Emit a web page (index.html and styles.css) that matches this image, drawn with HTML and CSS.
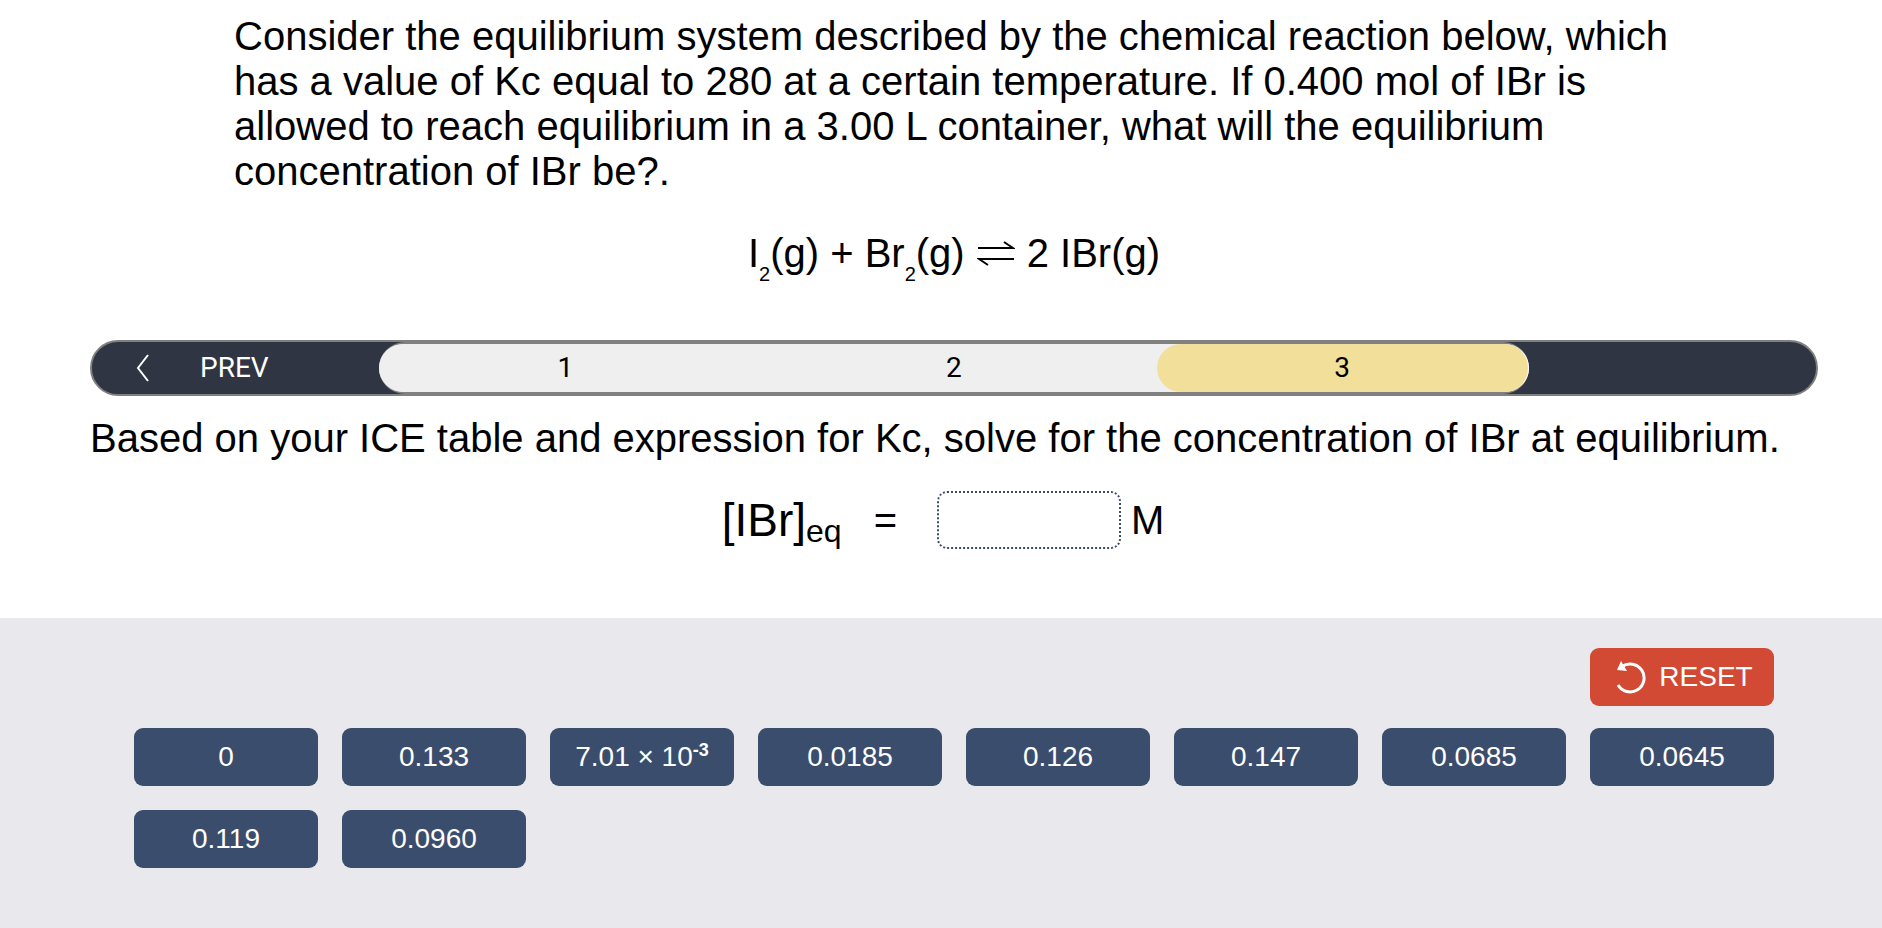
FILE: index.html
```
<!DOCTYPE html>
<html lang="en">

<head>
    <meta charset="UTF-8" />
    <meta name="viewport" content="width=device-width, initial-scale=1" />
    <title>Equilibrium Concentration</title>
    <link rel="stylesheet" href="styles.css">
</head>

<body>

    <main class="question">
        <p class="prompt">Consider the equilibrium system described by the chemical reaction below, which has a value of Kc equal to 280 at a certain temperature. If 0.400 mol of IBr is allowed to reach equilibrium in a 3.00 L container, what will the equilibrium concentration of IBr be?.</p>

        <p class="reaction">
            <span>I<sub>2</sub>(g) + Br<sub>2</sub>(g)</span>
            <svg class="arrows" viewBox="0 0 38 28" aria-label="is in equilibrium with">
                <path d="M1 8H36L27 2M37 19H2L11 25" />
            </svg>
            <span>2 IBr(g)</span>
        </p>

        <nav class="steps">
            <button type="button" class="prev">
                <svg class="chevron" viewBox="0 0 14 28" aria-hidden="true">
                    <path d="M12 1L2 14L12 27" />
                </svg>
                <span>PREV</span>
            </button>
            <div class="step-list">
                <button type="button" class="step">1</button>
                <button type="button" class="step">2</button>
                <button type="button" class="step active">3</button>
            </div>
        </nav>

        <p class="instruction">Based on your ICE table and expression for Kc, solve for the concentration of IBr at equilibrium.</p>

        <div class="answer">
            <label class="symbol" for="answerInput">[IBr]<sub>eq</sub></label>
            <span class="equals">=</span>
            <input type="text" id="answerInput" class="drop-box">
            <span class="unit">M</span>
        </div>
    </main>

    <section class="tray">
        <div class="tiles">
            <button type="button" class="tile reset">
                <svg class="reset-icon" viewBox="0 0 32 34" aria-hidden="true">
                    <path class="arc" d="M7 6.500A14 14 0 1 1 3 25" />
                    <path class="head" d="M6 1L12 11L2 10Z" />
                </svg>
                <span>RESET</span>
            </button>
        </div>
        <div class="tiles">
            <button type="button" class="tile">0</button>
            <button type="button" class="tile">0.133</button>
            <button type="button" class="tile">7.01 × 10<sup>-3</sup></button>
            <button type="button" class="tile">0.0185</button>
            <button type="button" class="tile">0.126</button>
            <button type="button" class="tile">0.147</button>
            <button type="button" class="tile">0.0685</button>
            <button type="button" class="tile">0.0645</button>
            <button type="button" class="tile">0.119</button>
            <button type="button" class="tile">0.0960</button>
        </div>
    </section>

</body>

</html>
```

FILE: styles.css
```
* {
    box-sizing: border-box;
}

body {
    margin: 0;
    min-height: 100vh;
    display: flex;
    flex-direction: column;
    background-color: #ffffff;
    color: #000000;
    font-family: "Liberation Sans", Arial, sans-serif;
    font-size: 40px;
    line-height: 45px;
}

button {
    border: none;
    margin: 0;
    font-family: inherit;
    font-size: 28px;
    line-height: 32px;
    cursor: pointer;
}

p {
    margin: 0;
}

.question {
    padding: 14px 64px 0 90px;
}

/* Question text and reaction */
.prompt {
    padding: 0 144px;
}

.reaction {
    display: flex;
    justify-content: center;
    align-items: center;
    gap: 12px;
    margin-top: 37px;
}

.reaction sub {
    font-size: 20px;
    line-height: 0;
    vertical-align: -14px;
}

.arrows {
    width: 38px;
    height: 28px;
    fill: none;
    stroke: #000000;
    stroke-width: 2;
}

/* Step bar */
.steps {
    display: grid;
    grid-template-columns: 1fr 4fr 1fr;
    height: 56px;
    margin-top: 64px;
    border: 2px solid #808080;
    border-radius: 28px;
    background-color: #2f3542;
}

.steps button {
    font-family: Roboto, sans-serif;
}

.prev {
    display: flex;
    align-items: center;
    gap: 50px;
    padding: 0 44px;
    background: none;
    color: #ffffff;
}

.chevron {
    width: 14px;
    height: 28px;
    fill: none;
    stroke: #ffffff;
    stroke-width: 2;
}

.step-list {
    display: flex;
    justify-content: space-between;
    border-top: 2px solid #808080;
    border-bottom: 2px solid #808080;
    border-radius: 28px;
    background-color: #efefef;
}

.step {
    width: 372px;
    border-radius: 24px;
    background-color: #efefef;
    color: #000000;
}

.step.active {
    border-right: 1px solid #ffffff;
    background-color: #f2df9a;
}

/* Answer row */
.instruction {
    margin-top: 20px;
}

.answer {
    display: flex;
    justify-content: center;
    align-items: center;
    margin-top: 30px;
    padding-right: 22px;
}

.symbol {
    font-size: 46px;
}

.symbol sub {
    font-size: 32px;
    line-height: 0;
    vertical-align: -6px;
}

.equals {
    margin: 0 40px 0 32px;
}

.drop-box {
    width: 184px;
    height: 58px;
    border: 2px dotted #3b4d6c;
    border-radius: 10px;
    background-color: #ffffff;
    font: inherit;
    text-align: center;
}

.unit {
    margin-left: 10px;
}

/* Answer tiles */
.tray {
    flex: 1;
    display: flex;
    flex-direction: column;
    gap: 22px;
    margin-top: 69px;
    padding: 30px 108px 58px 134px;
    background-color: #e9e9ed;
}

.tiles {
    display: grid;
    grid-template-columns: repeat(8, 1fr);
    gap: 24px;
}

.tile {
    height: 58px;
    padding: 0;
    border-radius: 9px;
    background-color: #3b4d6c;
    color: #ffffff;
}

.tile sup {
    font-size: 18px;
    line-height: 0;
    font-weight: bold;
}

.reset {
    grid-column: 8;
    display: flex;
    justify-content: center;
    align-items: center;
    gap: 12px;
    padding-left: 4px;
    background-color: #d24a34;
}

.reset-icon {
    width: 32px;
    height: 34px;
}

.reset-icon .arc {
    fill: none;
    stroke: #ffffff;
    stroke-width: 3;
}

.reset-icon .head {
    fill: #ffffff;
}
```
